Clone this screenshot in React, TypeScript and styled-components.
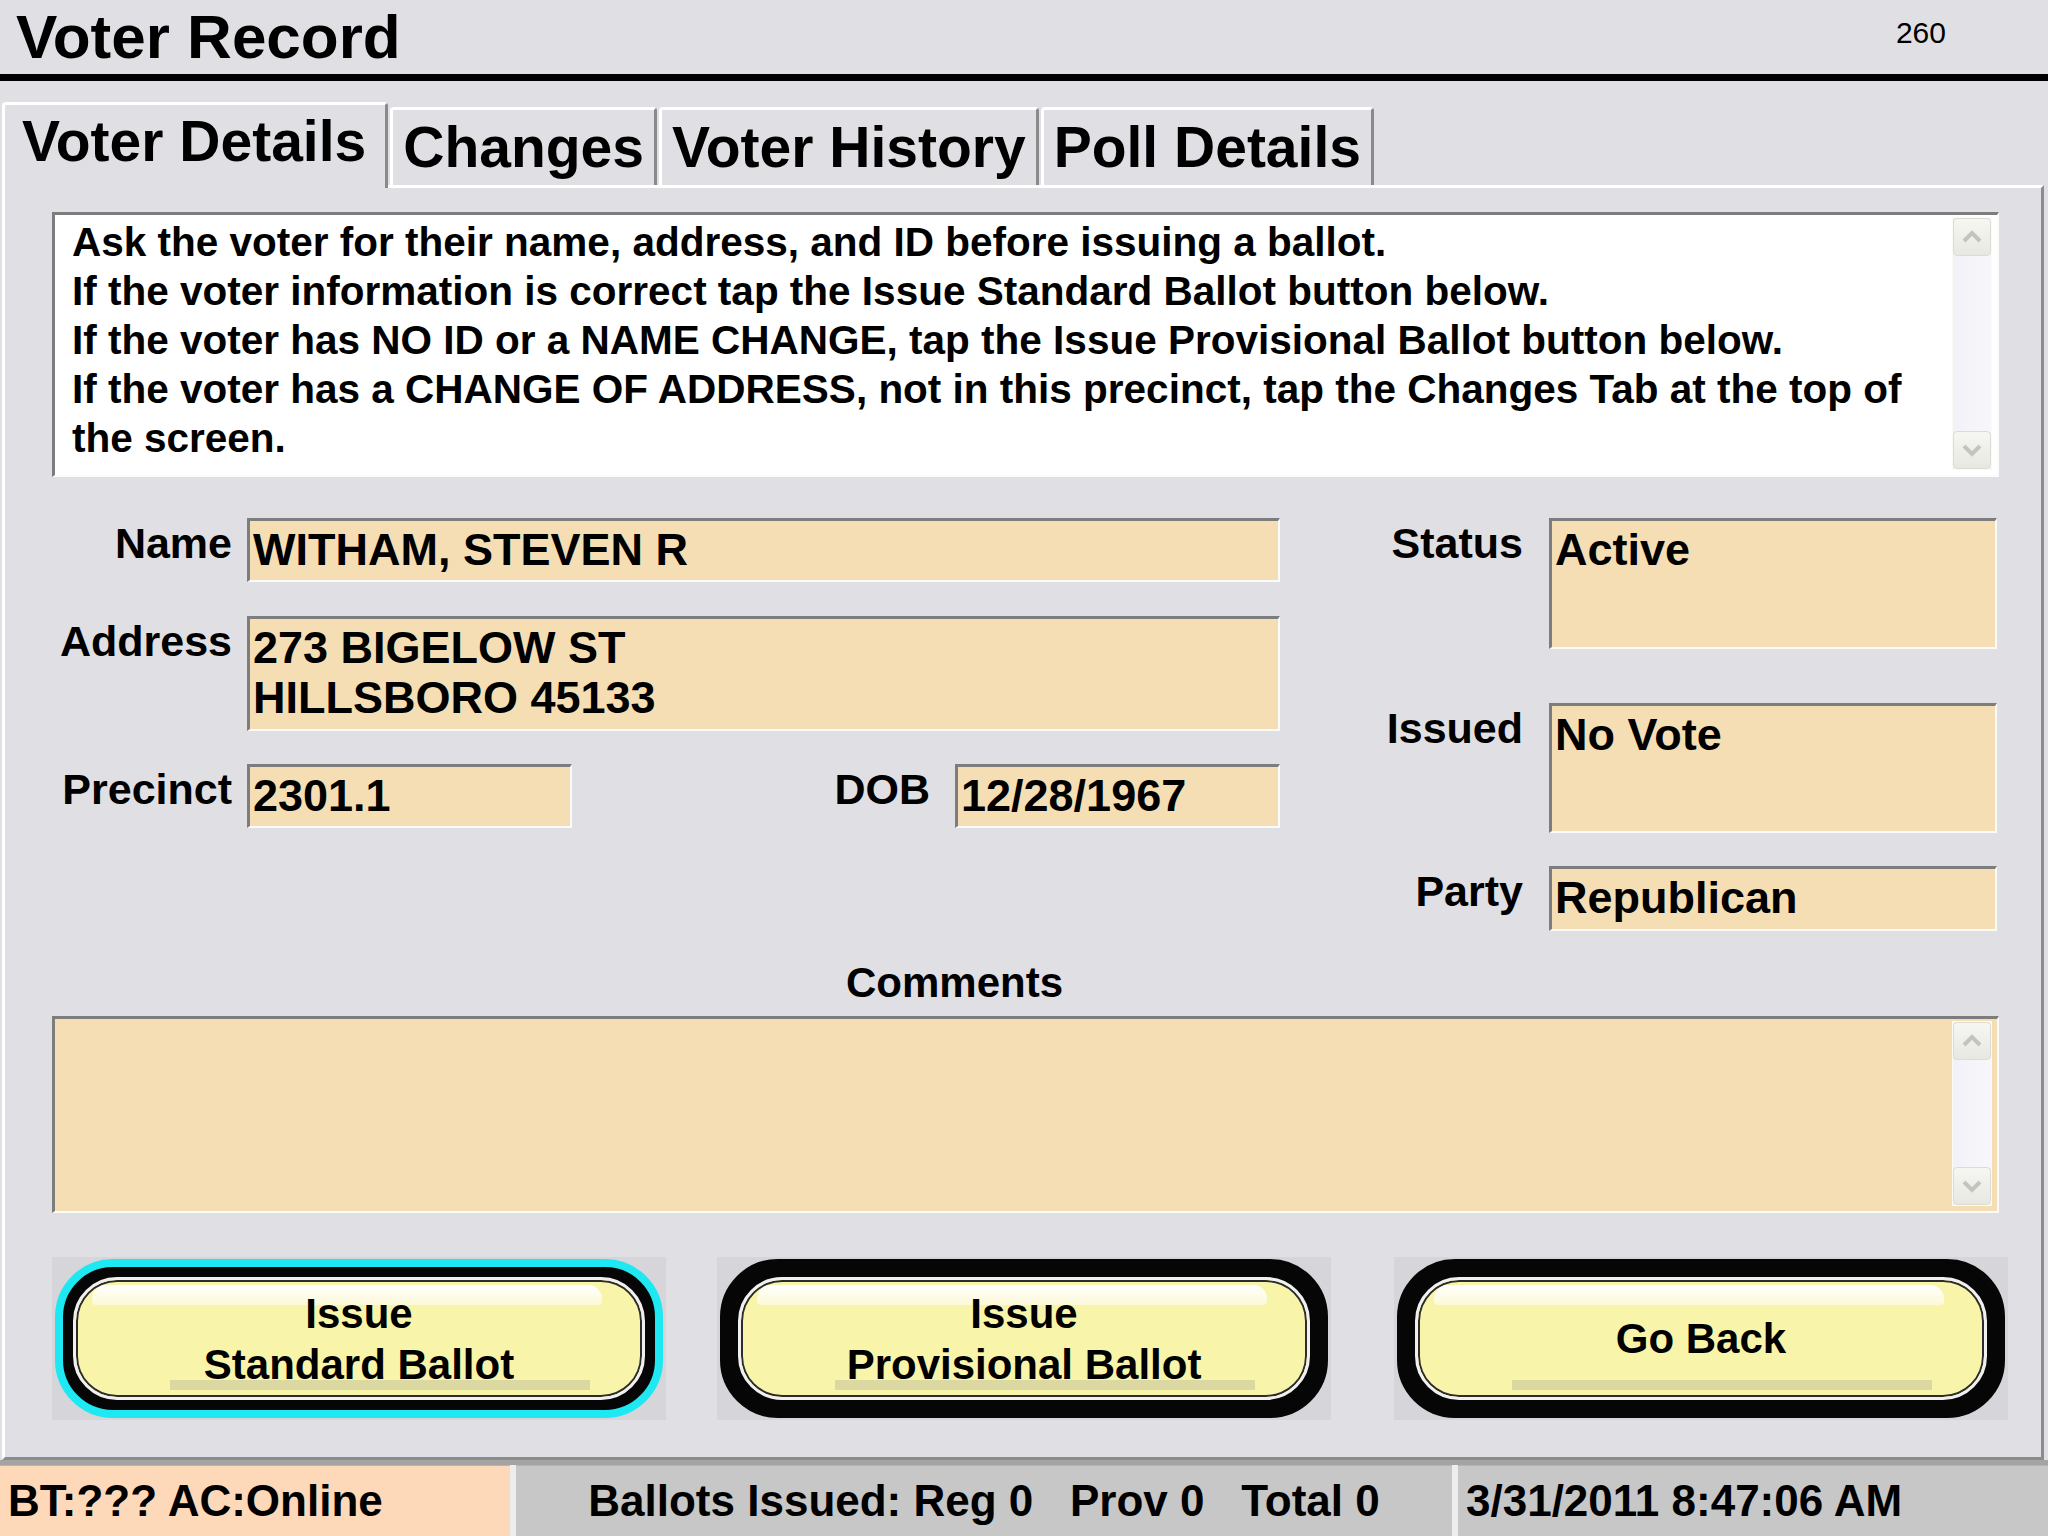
import React from 'react'
import styled, { createGlobalStyle, css } from 'styled-components'

const GlobalStyle = createGlobalStyle`
  html, body {
    margin: 0;
    padding: 0;
  }
  body {
    background: #e0dfe3;
    font-family: 'Liberation Sans', Arial, sans-serif;
    color: #000;
  }
  * {
    box-sizing: border-box;
  }
`

const sunken = css`
  border-style: solid;
  border-width: 3px 2px 2px 3px;
  border-color: #7d7d7d #fbfbfb #fbfbfb #7d7d7d;
`

const Screen = styled.div`
  width: 2048px;
  height: 1536px;
  display: flex;
  flex-direction: column;
  background: #e0dfe3;
  overflow: hidden;
`

const TitleBar = styled.header`
  height: 74px;
  display: flex;
  align-items: flex-start;
  justify-content: space-between;
  padding: 0 102px 0 16px;
`

const Title = styled.h1`
  margin: 0;
  font-size: 62px;
  font-weight: 700;
  line-height: 74px;
`

const ScreenId = styled.span`
  margin-top: 18px;
  font-size: 30px;
  line-height: 30px;
`

const Rule = styled.div`
  height: 7px;
  background: #000;
`

const TabStrip = styled.nav`
  margin-top: 21px;
  height: 83px;
  display: flex;
  align-items: flex-end;
  gap: 2px;
  padding-left: 2px;
`

const Tab = styled.div<{ $active?: boolean }>`
  position: relative;
  z-index: ${({ $active }) => ($active ? 1 : 0)};
  height: ${({ $active }) => ($active ? '86px' : '78px')};
  margin-bottom: ${({ $active }) => ($active ? '-3px' : '0')};
  padding: ${({ $active }) => ($active ? '3px 19px 0 17px' : '4px 10px 0 10px')};
  border-top: 3px solid #fff;
  border-left: 3px solid #fff;
  border-right: 3px solid #8a8a8a;
  border-radius: 4px 4px 0 0;
  background: #e0dfe3;
  font-size: 57px;
  font-weight: 700;
  line-height: 66px;
  white-space: nowrap;
`

const Panel = styled.main`
  flex: 1;
  margin: 0 4px 0 2px;
  border-style: solid;
  border-width: 3px;
  border-color: #fff #8c8c8c #8c8c8c #fff;
  padding: 24px 42px 0 47px;
  display: flex;
  flex-direction: column;
`

const TextWell = styled.div<{ $bg: string; $h: number }>`
  ${sunken};
  height: ${({ $h }) => $h}px;
  background: ${({ $bg }) => $bg};
  display: flex;
`

const WellText = styled.div`
  flex: 1;
  padding: 3px 10px 0 17px;
  font-size: 40.5px;
  font-weight: 700;
  line-height: 49px;
`

const ScrollBar = styled.div`
  width: 40px;
  margin: 2px 5px 5px 0;
  display: flex;
  flex-direction: column;
  justify-content: space-between;
  background: linear-gradient(90deg, #f1f1f7, #f7f7fb);
  border: 1px solid #fbfbf4;
`

const ScrollButton = styled.div`
  height: 38px;
  border-radius: 4px;
  border: 1px solid #dcdcd2;
  background: linear-gradient(#f6f6f2, #e8e8e3);
  display: flex;
  align-items: center;
  justify-content: center;
`

const FieldsArea = styled.section`
  margin-top: 41px;
  display: grid;
  grid-template-columns: 1228px 1fr;
`

const Column = styled.div`
  display: flex;
  flex-direction: column;
`

const LeftRow = styled.div<{ $gap?: number }>`
  margin-top: ${({ $gap }) => $gap ?? 0}px;
  display: grid;
  grid-template-columns: 180px 1fr;
  column-gap: 15px;
`

const RightRow = styled.div<{ $gap?: number }>`
  margin-top: ${({ $gap }) => $gap ?? 0}px;
  margin-right: 2px;
  display: grid;
  grid-template-columns: 1fr 448px;
  column-gap: 26px;
`

const InlinePair = styled.div`
  display: flex;
  align-items: flex-start;
  gap: 25px;
`

const Label = styled.div<{ $push?: boolean }>`
  margin-left: ${({ $push }) => ($push ? 'auto' : '0')};
  font-size: 43px;
  font-weight: 700;
  line-height: 50px;
  text-align: right;
  white-space: nowrap;
`

const Field = styled.div<{ $h: number; $w?: number }>`
  ${sunken};
  height: ${({ $h }) => $h}px;
  width: ${({ $w }) => ($w ? `${$w}px` : 'auto')};
  background: #f5deb3;
  padding: 4px 3px 0;
  font-size: 45px;
  font-weight: 700;
  line-height: 50px;
  white-space: pre-line;
`

const CommentsLabel = styled.div`
  margin-top: 27px;
  padding-left: 794px;
  font-size: 42px;
  font-weight: 700;
  line-height: 50px;
`

const CommentsWell = styled(TextWell)`
  margin-top: 8px;
  justify-content: flex-end;
`

const ButtonRow = styled.div`
  margin-top: 44px;
  display: flex;
`

const ButtonWell = styled.div<{ $gap?: number }>`
  flex: 0 0 614px;
  height: 163px;
  margin-left: ${({ $gap }) => $gap ?? 0}px;
  padding: 2px 3px;
  background: #d6d5da;
`

const BallotButton = styled.button<{ $focused?: boolean }>`
  width: 100%;
  height: 100%;
  padding: 10px;
  border-radius: 58px;
  border: 8px solid ${({ $focused }) => ($focused ? '#1ee8f2' : '#060606')};
  background: #060606;
  font-family: inherit;
  color: #000;
  cursor: pointer;
`

const ButtonFace = styled.span`
  position: relative;
  width: 100%;
  height: 100%;
  display: flex;
  flex-direction: column;
  align-items: center;
  justify-content: center;
  border-radius: 44px;
  border: 3px solid #f0f0f0;
  box-shadow: inset 0 0 0 2px #2c2c2c;
  background: #f8f4a9;
  font-size: 42px;
  font-weight: 700;
  line-height: 51px;

  &::before {
    content: '';
    position: absolute;
    top: 5px;
    left: 16px;
    right: 40px;
    height: 20px;
    border-radius: 14px 14px 4px 4px;
    background: linear-gradient(#ffffff, #fcf9d6);
  }

  &::after {
    content: '';
    position: absolute;
    bottom: 7px;
    left: 94px;
    right: 52px;
    height: 10px;
    background: #dcd8a2;
  }
`

const FaceLine = styled.span`
  position: relative;
  z-index: 1;
`

const StatusBar = styled.footer`
  height: 76px;
  display: grid;
  grid-template-columns: 510px 936px 1fr;
  column-gap: 6px;
  border-top: 5px solid #a4a4a4;
  background: #ededed;
`

const StatusCell = styled.div<{ $tone: 'peach' | 'gray'; $center?: boolean }>`
  padding-left: ${({ $center }) => ($center ? '0' : '8px')};
  background: ${({ $tone }) => ($tone === 'peach' ? '#fed9b9' : '#c7c7c7')};
  border-top: 1px solid #b4b4b4;
  text-align: ${({ $center }) => ($center ? 'center' : 'left')};
  font-size: 44px;
  font-weight: 700;
  line-height: 70px;
  white-space: pre;
`

const Chevron = ({ down }: { down?: boolean }) => (
  <svg width="22" height="14" viewBox="0 0 22 14">
    <polyline
      points={down ? '3,3 11,11 19,3' : '3,11 11,3 19,11'}
      fill="none"
      stroke="#c4c4be"
      strokeWidth="4"
    />
  </svg>
)

const Scroller = () => (
  <ScrollBar>
    <ScrollButton>
      <Chevron />
    </ScrollButton>
    <ScrollButton>
      <Chevron down />
    </ScrollButton>
  </ScrollBar>
)

const tabs = ['Voter Details', 'Changes', 'Voter History', 'Poll Details']

const App = () => {
  return (
    <Screen>
      <GlobalStyle />
      <TitleBar>
        <Title>Voter Record</Title>
        <ScreenId>260</ScreenId>
      </TitleBar>
      <Rule />
      <TabStrip>
        {tabs.map((tab, i) => (
          <Tab key={tab} $active={i === 0}>
            {tab}
          </Tab>
        ))}
      </TabStrip>
      <Panel>
        <TextWell $bg="#ffffff" $h={265}>
          <WellText>
            Ask the voter for their name, address, and ID before issuing a ballot.
            <br />
            If the voter information is correct tap the Issue Standard Ballot button below.
            <br />
            If the voter has NO ID or a NAME CHANGE, tap the Issue Provisional Ballot button below.
            <br />
            If the voter has a CHANGE OF ADDRESS, not in this precinct, tap the Changes Tab at the top of the screen.
          </WellText>
          <Scroller />
        </TextWell>

        <FieldsArea>
          <Column>
            <LeftRow>
              <Label>Name</Label>
              <Field $h={64}>WITHAM, STEVEN R</Field>
            </LeftRow>
            <LeftRow $gap={34}>
              <Label>Address</Label>
              <Field $h={115}>{'273 BIGELOW ST\nHILLSBORO 45133'}</Field>
            </LeftRow>
            <LeftRow $gap={33}>
              <Label>Precinct</Label>
              <InlinePair>
                <Field $h={64} $w={325}>
                  2301.1
                </Field>
                <Label $push>DOB</Label>
                <Field $h={64} $w={325}>
                  12/28/1967
                </Field>
              </InlinePair>
            </LeftRow>
          </Column>
          <Column>
            <RightRow>
              <Label>Status</Label>
              <Field $h={131}>Active</Field>
            </RightRow>
            <RightRow $gap={54}>
              <Label>Issued</Label>
              <Field $h={130}>No Vote</Field>
            </RightRow>
            <RightRow $gap={33}>
              <Label>Party</Label>
              <Field $h={65}>Republican</Field>
            </RightRow>
          </Column>
        </FieldsArea>

        <CommentsLabel>Comments</CommentsLabel>
        <CommentsWell $bg="#f5deb3" $h={197}>
          <Scroller />
        </CommentsWell>

        <ButtonRow>
          <ButtonWell>
            <BallotButton $focused>
              <ButtonFace>
                <FaceLine>Issue</FaceLine>
                <FaceLine>Standard Ballot</FaceLine>
              </ButtonFace>
            </BallotButton>
          </ButtonWell>
          <ButtonWell $gap={51}>
            <BallotButton>
              <ButtonFace>
                <FaceLine>Issue</FaceLine>
                <FaceLine>Provisional Ballot</FaceLine>
              </ButtonFace>
            </BallotButton>
          </ButtonWell>
          <ButtonWell $gap={63}>
            <BallotButton>
              <ButtonFace>
                <FaceLine>Go Back</FaceLine>
              </ButtonFace>
            </BallotButton>
          </ButtonWell>
        </ButtonRow>
      </Panel>
      <StatusBar>
        <StatusCell $tone="peach">BT:??? AC:Online</StatusCell>
        <StatusCell $tone="gray" $center>
          {'Ballots Issued: Reg 0   Prov 0   Total 0'}
        </StatusCell>
        <StatusCell $tone="gray">3/31/2011 8:47:06 AM</StatusCell>
      </StatusBar>
    </Screen>
  )
}

export default App
